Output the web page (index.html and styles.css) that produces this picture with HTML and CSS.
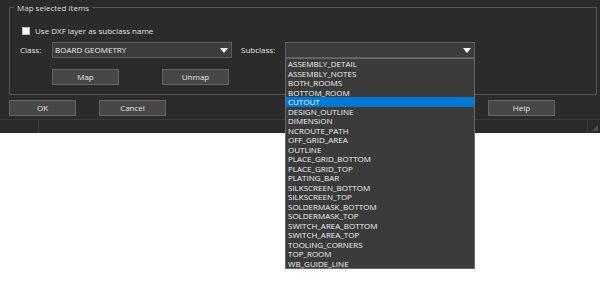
FILE: index.html
```html
<!DOCTYPE html>
<html>
<head>
<meta charset="utf-8">
<link rel="stylesheet" href="styles.css">
</head>
<body>
<div class="dialog">
  <div class="group">
    <span class="legend">Map selected items</span>
    <div class="row-check">
      <span class="checkbox"></span>
      <span class="label">Use DXF layer as subclass name</span>
    </div>
    <div class="row-class">
      <span class="label lbl-class">Class:</span>
      <div class="combo combo-class">
        <span class="combo-text">BOARD GEOMETRY</span>
        <span class="arrow"></span>
      </div>
      <span class="label lbl-sub">Subclass:</span>
      <div class="combo combo-sub">
        <span class="combo-text"></span>
        <span class="arrow"></span>
        <ul class="list">
          <li>ASSEMBLY_DETAIL</li>
          <li>ASSEMBLY_NOTES</li>
          <li>BOTH_ROOMS</li>
          <li>BOTTOM_ROOM</li>
          <li class="sel">CUTOUT</li>
          <li>DESIGN_OUTLINE</li>
          <li>DIMENSION</li>
          <li>NCROUTE_PATH</li>
          <li>OFF_GRID_AREA</li>
          <li>OUTLINE</li>
          <li>PLACE_GRID_BOTTOM</li>
          <li>PLACE_GRID_TOP</li>
          <li>PLATING_BAR</li>
          <li>SILKSCREEN_BOTTOM</li>
          <li>SILKSCREEN_TOP</li>
          <li>SOLDERMASK_BOTTOM</li>
          <li>SOLDERMASK_TOP</li>
          <li>SWITCH_AREA_BOTTOM</li>
          <li>SWITCH_AREA_TOP</li>
          <li>TOOLING_CORNERS</li>
          <li>TOP_ROOM</li>
          <li>WB_GUIDE_LINE</li>
        </ul>
      </div>
    </div>
    <div class="row-btn">
      <span class="btn btn-map">Map</span>
      <span class="btn btn-unmap">Unmap</span>
    </div>
  </div>
  <div class="row-dlg">
    <span class="btn">OK</span>
    <span class="btn btn-cancel">Cancel</span>
    <span class="btn btn-help">Help</span>
  </div>
  <div class="status">
    <span class="cell cell-a"></span>
    <span class="cell cell-b"></span>
    <span class="grip"></span>
  </div>
</div>
</body>
</html>
```
FILE: styles.css
```css
* { box-sizing: border-box; }
html, body { margin: 0; padding: 0; background: #ffffff; }
body {
  font-family: "Open Sans", "Noto Sans", sans-serif;
  font-size: 8px;
  color: #e2e2e2;
  width: 600px;
  height: 285px;
  overflow: hidden;
}
.dialog {
  background: #2b2b2b;
  height: 133px;
  padding: 7px 3px 0 9px;
  display: flex;
  flex-direction: column;
}
.group {
  position: relative;
  border: 1px solid #555555;
  height: 88px;
  padding: 18px 0 0 10px;
  display: flex;
  flex-direction: column;
}
.legend {
  position: absolute;
  top: -6px;
  left: 4px;
  padding: 0 3px;
  background: #2b2b2b;
  line-height: 11px;
  color: #dcdcdc;
}
.label { line-height: 10px; white-space: nowrap; }
.row-check {
  display: flex;
  align-items: center;
  height: 10px;
  padding-left: 2px;
}
.checkbox {
  width: 8px;
  height: 8px;
  background: #ffffff;
  border: 1px solid #bdbdbd;
  margin-right: 5px;
}
.row-class {
  display: flex;
  align-items: center;
  height: 16px;
  margin-top: 6px;
}
.lbl-class { width: 32px; }
.lbl-sub { margin-left: 9px; width: 44px; }
.combo {
  position: relative;
  height: 16px;
  background: #3d3d3d;
  border: 1px solid #5e5e5e;
  display: flex;
  align-items: center;
  padding-left: 2px;
}
.combo-class { width: 180px; }
.combo-sub { width: 190px; }
.combo-text { flex: 1; color: #ececec; line-height: 10px; }
.arrow {
  width: 0;
  height: 0;
  border-left: 4px solid transparent;
  border-right: 4px solid transparent;
  border-top: 5px solid #ffffff;
  margin-right: 3px;
}
.list {
  position: absolute;
  left: -1px;
  top: 15px;
  width: 190px;
  margin: 0;
  padding: 0;
  list-style: none;
  background: #3b3b3b;
  border: 1px solid #6a6a6a;
  z-index: 5;
}
.list li {
  height: 9.5px;
  line-height: 9.5px;
  padding-left: 2px;
  color: #f0f0f0;
  white-space: nowrap;
}
.list li.sel { background: #0078d7; color: #ffffff; }
.row-btn {
  display: flex;
  height: 16px;
  margin-top: 11px;
  padding-left: 32px;
}
.btn {
  width: 67px;
  height: 16px;
  background: #474747;
  border: 1px solid #646464;
  display: flex;
  align-items: center;
  justify-content: center;
  color: #e6e6e6;
  line-height: 10px;
}
.btn-unmap { margin-left: 43px; }
.row-dlg {
  display: flex;
  margin-top: 5px;
  height: 16px;
}
.btn-cancel { margin-left: 23px; }
.btn-help { margin-left: 322px; }
.status {
  position: relative;
  margin: 3px 0 0 -9px;
  width: 600px;
  flex: 1;
  border-top: 1px solid #3a3a3a;
  background: #2a2a2a;
  display: flex;
}
.cell { height: 100%; }
.cell-a { width: 39px; border-right: 1px solid #383838; }
.cell-b { width: 549px; border-right: 1px solid #383838; }
.grip {
  position: absolute;
  right: 2px;
  bottom: 2px;
  width: 6px;
  height: 6px;
  background:
    radial-gradient(circle, #777 0.6px, transparent 0.8px) 0 0 / 2px 2px;
  clip-path: polygon(100% 0, 100% 100%, 0 100%);
}
```
